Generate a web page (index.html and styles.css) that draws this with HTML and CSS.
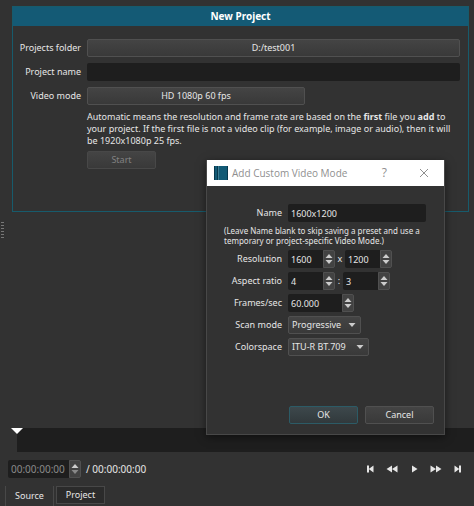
FILE: index.html
```html
<!DOCTYPE html>
<html lang="en">
<head>
<meta charset="utf-8">
<meta name="viewport" content="width=device-width, initial-scale=1">
<title>New Project</title>
<link rel="stylesheet" href="styles.css">
</head>
<body>
<svg class="defs" aria-hidden="true">
  <symbol id="up" viewBox="0 0 8 4"><path d="M0.5 4 4 0 7.5 4Z"/></symbol>
  <symbol id="down" viewBox="0 0 8 4"><path d="M0.5 0H7.5L4 4Z"/></symbol>
</svg>
<main class="workspace">
  <span class="grip" aria-hidden="true"></span>
  <section class="panel">
    <h1 class="panel-title">New Project</h1>
    <form class="project-form">
      <label for="folder">Projects folder</label>
      <button class="btn" id="folder" type="button">D:/test001</button>
      <label for="pname">Project name</label>
      <input class="field" id="pname" type="text">
      <label for="vmode">Video mode</label>
      <button class="btn mode" id="vmode" type="button">HD 1080p 60 fps</button>
      <p class="hint">Automatic means the resolution and frame rate are based on the <b>first</b> file you <b>add</b> to your project. If the first file is not a video clip (for example, image or audio), then it will be 1920x1080p 25 fps.</p>
      <button class="btn start" type="button" disabled>Start</button>
    </form>
  </section>
</main>

<section class="player">
  <div class="scrub">
    <svg class="playhead" viewBox="0 0 12 6" aria-hidden="true"><path d="M0 0H12L6 6Z"/></svg>
    <div class="track"></div>
  </div>
  <div class="controls">
    <div class="spin time">
      <input class="field" type="text" value="00:00:00:00" aria-label="Position" disabled>
      <span class="steps">
        <button type="button" aria-label="Later"><svg><use href="#up"/></svg></button>
        <button type="button" aria-label="Earlier" disabled><svg><use href="#down"/></svg></button>
      </span>
    </div>
    <span class="duration">/ 00:00:00:00</span>
    <div class="transport">
      <button type="button" aria-label="Previous"><svg viewBox="0 0 12 8"><path d="M3 0.5H5V3.8L9.5 0.5V7.5L5 4.2V7.5H3Z"/></svg></button>
      <button type="button" aria-label="Rewind"><svg viewBox="0 0 12 8"><path d="M6 0.5V7.5L0.5 4ZM11.5 0.5V7.5L6 4Z"/></svg></button>
      <button type="button" aria-label="Play"><svg viewBox="0 0 12 8"><path d="M4 0.5 9.5 4 4 7.5Z"/></svg></button>
      <button type="button" aria-label="Fast forward"><svg viewBox="0 0 12 8"><path d="M0.5 0.5 6 4 0.5 7.5ZM6 0.5 11.5 4 6 7.5Z"/></svg></button>
      <button type="button" aria-label="Next"><svg viewBox="0 0 12 8"><path d="M2.5 0.5 7 3.8V0.5H9V7.5H7V4.2L2.5 7.5Z"/></svg></button>
    </div>
  </div>
  <div class="tabs" role="tablist">
    <button class="tab active" type="button" role="tab" aria-selected="true">Source</button>
    <button class="tab" type="button" role="tab" aria-selected="false">Project</button>
  </div>
</section>

<div class="dialog" role="dialog" aria-labelledby="dialog-title">
  <header class="titlebar">
    <svg class="logo" viewBox="0 0 14 14" aria-hidden="true"><path fill="#125a75" d="M0 0H14V14H0Z"/><path fill="#07384d" d="M0 0H1V14H0ZM3 0H4V14H3ZM13 0H14V14H13Z"/><path fill="#3d7e94" d="M4 0H5V14H4Z"/></svg>
    <h2 id="dialog-title">Add Custom Video Mode</h2>
    <button class="help" type="button" aria-label="Help">?</button>
    <button class="close" type="button" aria-label="Close"><svg viewBox="0 0 10 10"><path d="M1 1 9 9M9 1 1 9"/></svg></button>
  </header>
  <form class="mode-form">
    <label for="name">Name</label>
    <input class="field name" id="name" type="text" value="1600x1200">
    <p class="note">(Leave Name blank to skip saving a preset and use a temporary or project-specific Video Mode.)</p>
    <label for="width">Resolution</label>
    <div class="pair">
      <div class="spin"><input class="field" id="width" type="text" value="1600"><span class="steps"><button type="button" aria-label="Increase width"><svg><use href="#up"/></svg></button><button type="button" aria-label="Decrease width"><svg><use href="#down"/></svg></button></span></div>
      <span class="by">x</span>
      <div class="spin"><input class="field" type="text" value="1200" aria-label="Height"><span class="steps"><button type="button" aria-label="Increase height"><svg><use href="#up"/></svg></button><button type="button" aria-label="Decrease height"><svg><use href="#down"/></svg></button></span></div>
    </div>
    <label for="aspect">Aspect ratio</label>
    <div class="pair">
      <div class="spin"><input class="field" id="aspect" type="text" value="4"><span class="steps"><button type="button" aria-label="Increase aspect width"><svg><use href="#up"/></svg></button><button type="button" aria-label="Decrease aspect width"><svg><use href="#down"/></svg></button></span></div>
      <span class="colon">:</span>
      <div class="spin"><input class="field" type="text" value="3" aria-label="Aspect height"><span class="steps"><button type="button" aria-label="Increase aspect height"><svg><use href="#up"/></svg></button><button type="button" aria-label="Decrease aspect height"><svg><use href="#down"/></svg></button></span></div>
    </div>
    <label for="fps">Frames/sec</label>
    <div class="pair">
      <div class="spin wide"><input class="field" id="fps" type="text" value="60.000"><span class="steps"><button type="button" aria-label="Increase frame rate"><svg><use href="#up"/></svg></button><button type="button" aria-label="Decrease frame rate"><svg><use href="#down"/></svg></button></span></div>
    </div>
    <label for="scan">Scan mode</label>
    <div class="combo scan">
      <select class="btn" id="scan"><option>Progressive</option><option>Interlaced</option></select>
      <svg aria-hidden="true"><use href="#down"/></svg>
    </div>
    <label for="space">Colorspace</label>
    <div class="combo space">
      <select class="btn" id="space"><option>ITU-R BT.709</option><option>ITU-R BT.601</option></select>
      <svg aria-hidden="true"><use href="#down"/></svg>
    </div>
  </form>
  <footer class="actions">
    <button class="btn ok" type="button">OK</button>
    <button class="btn" type="button">Cancel</button>
  </footer>
</div>
</body>
</html>
```

FILE: styles.css
```css
* { box-sizing: border-box; }

body {
  margin: 0;
  min-height: 100vh;
  display: flex;
  flex-direction: column;
  background: #323232;
  color: #e6e6e6;
  font: 9px/12px "Noto Sans", "DejaVu Sans", sans-serif;
}

button, input, select { font: inherit; color: inherit; margin: 0; }
button { padding: 0; border: 0; background: none; }
svg { display: block; fill: currentColor; }
h1, h2, p { margin: 0; }
.defs { position: absolute; width: 0; height: 0; }

.btn {
  height: 18px;
  border: 1px solid #505050;
  border-radius: 2px;
  background: linear-gradient(#444, #393939);
  text-align: center;
}

.field {
  min-width: 0;
  height: 18px;
  padding: 0 3px;
  border: 0;
  border-radius: 2px;
  background: #1e1e1e;
}

/* Project panel */
.workspace {
  flex: 1;
  position: relative;
  padding: 6px 5px 0 12px;
}
.grip {
  position: absolute;
  left: 1px;
  top: 222px;
  width: 3px;
  height: 16px;
  background: repeating-linear-gradient(#777 0 1px, transparent 1px 3px);
}
.panel {
  border: 1px solid #175b6c;
  padding-bottom: 42px;
}
.panel-title {
  padding: 3px 0 4px;
  background: #145a75;
  color: #fff;
  font-size: 10px;
  line-height: 12px;
  text-align: center;
}
.project-form {
  display: grid;
  grid-template-columns: 68px 1fr;
  gap: 6px;
  align-items: center;
  padding: 13px 8px 0 0;
}
.project-form label, .mode-form label {
  text-align: right;
  white-space: nowrap;
}
.mode { width: 218px; }
.hint { grid-column: 2; margin-bottom: -2px; }
.start { grid-column: 2; width: 69px; }
.start:disabled { color: #828282; border-color: #484848; }

/* Player */
.scrub { position: relative; padding-left: 17px; }
.track { height: 24px; background: #1e1e1e; }
.playhead {
  position: absolute;
  left: 11px;
  top: 0;
  width: 12px;
  height: 6px;
  fill: #fff;
}
.controls {
  display: flex;
  align-items: center;
  padding: 8px;
  font-size: 10px;
}
.duration { margin-left: 5px; }
.transport { display: flex; gap: 10px; margin-left: auto; margin-right: 2px; }
.transport svg { width: 12px; height: 8px; }

.spin { display: flex; width: 47px; }
.spin .field { flex: 1; border-radius: 2px 0 0 2px; }
.spin.wide { width: 66px; }
.spin.time { width: 73px; }
.time .field { color: #8a8a8a; }
.steps {
  display: flex;
  flex-direction: column;
  justify-content: space-evenly;
  align-items: center;
  width: 12px;
  height: 18px;
  border: 1px solid #505050;
  border-radius: 0 2px 2px 0;
  background: #424242;
}
.steps svg, .combo svg { width: 8px; height: 4px; color: #ccc; }
.steps button:disabled svg { color: #888; }

.tabs {
  display: flex;
  align-items: flex-start;
  gap: 2px;
  margin-left: 5px;
}
.tab {
  width: 49px;
  height: 18px;
  border: 1px solid #484848;
  background: #2b2b2b;
}
.tab.active {
  height: 20px;
  border-width: 0 1px;
  background: #323232;
}

/* Dialog */
.dialog {
  position: absolute;
  left: 206px;
  top: 160px;
  width: 239px;
  background: #323232;
  border: 1px solid #484848;
  border-top: 0;
  box-shadow: 0 2px 8px rgba(0, 0, 0, .5);
}
.titlebar {
  display: flex;
  align-items: center;
  height: 26px;
  padding: 0 15px 0 7px;
  background: #fff;
  color: #8f8f8f;
}
.logo { width: 14px; height: 14px; }
.titlebar h2 {
  margin-left: 4px;
  font: 10px/16px "Open Sans", "Noto Sans", sans-serif;
}
.help { margin-left: auto; font: 12px/16px "Open Sans", "Noto Sans", sans-serif; }
.close { margin-left: 32px; }
.close svg { width: 10px; height: 10px; fill: none; stroke: currentColor; }

.mode-form {
  display: grid;
  grid-template-columns: 75px 1fr;
  column-gap: 6px;
  row-gap: 4px;
  align-items: center;
  padding: 18px 18px 0 0;
}
.note {
  grid-column: 1 / -1;
  padding-left: 17px;
  font-size: 8px;
  line-height: 10px;
}
.pair { display: flex; align-items: center; }
.by { width: 10px; text-align: center; }
.colon { width: 8px; text-align: center; }

.combo { position: relative; }
.combo select {
  width: 100%;
  padding: 0 3px;
  appearance: none;
  text-align: left;
}
.combo svg {
  position: absolute;
  right: 5px;
  top: 7px;
  pointer-events: none;
}
.scan { width: 73px; }
.space { width: 81px; }

.actions {
  display: flex;
  justify-content: flex-end;
  gap: 7px;
  padding: 50px 10px 10px;
}
.actions .btn { width: 69px; }
.actions .ok {
  border-color: #2c5b66;
  background: linear-gradient(#3d484c, #31393c);
}
```
